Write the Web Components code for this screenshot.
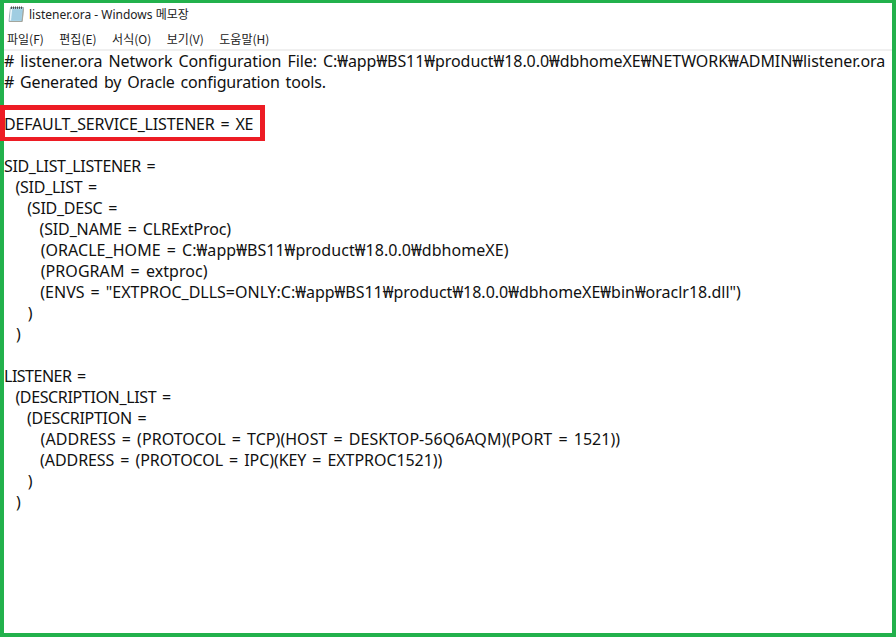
<!DOCTYPE html>
<html>
<head>
<meta charset="utf-8">
<title>listener.ora - Windows 메모장</title>
<style>
  html, body { margin: 0; padding: 0; background: #fff; }
  notepad-window { height: 637px; }
</style>
</head>
<body>
<notepad-window>
  <notepad-titlebar>listener.ora - Windows 메모장</notepad-titlebar>
  <notepad-menubar></notepad-menubar>
  <notepad-editor></notepad-editor>
</notepad-window>

<script>
class NotepadWindow extends HTMLElement {
  constructor() {
    super();
    this.attachShadow({ mode: 'open' });
    this.shadowRoot.innerHTML = `
      <style>
        :host {
          display: flex;
          flex-direction: column;
          box-sizing: border-box;
          width: 896px;
          border: solid #22b14c;
          border-width: 3px 4px 4px 4px;
          background: #fff;
          position: relative;
        }
      </style>
      <slot></slot>
    `;
  }
}

class NotepadTitlebar extends HTMLElement {
  constructor() {
    super();
    this.attachShadow({ mode: 'open' });
    this.shadowRoot.innerHTML = `
      <style>
        :host {
          display: flex;
          align-items: center;
          gap: 5px;
          box-sizing: border-box;
          height: 25px;
          padding: 0 0 4px 4px;
          font: 12px "Noto Sans", "Noto Sans CJK KR", sans-serif;
          color: #222;
        }
        svg { width: 16px; height: 16px; flex: none; }
      </style>
      <svg viewBox="0 0 16 16">
        <path d="M2.5 1.5h13l-1.5 14H1z" fill="#a8d3e6" stroke="#8a9aa3" stroke-width=".8"/>
        <path d="M2.6 3h1.6L3 14.6H1.6z" fill="#eef7fb"/>
        <path d="M4.5 5h9.5M4.3 7h9.5M4.1 9h9.5M3.9 11h9.5M3.7 13h9.5" stroke="#8fc0d8" stroke-width=".6"/>
        <path d="M3.5 .5v2.4M5.5 .5v2.4M7.5 .5v2.4M9.5 .5v2.4M11.5 .5v2.4M13.5 .5v2.4" stroke="#4a4a4a" stroke-width="1"/>
        <path d="M2 15.6h12.2l1.4-13" fill="none" stroke="#a8a493" stroke-width=".8"/>
      </svg>
      <slot></slot>
    `;
  }
}

class NotepadMenubar extends HTMLElement {
  constructor() {
    super();
    this.attachShadow({ mode: 'open' });
    const items = ['파일(F)', '편집(E)', '서식(O)', '보기(V)', '도움말(H)'];
    this.shadowRoot.innerHTML = `
      <style>
        :host {
          display: flex;
          align-items: center;
          gap: 15.5px;
          height: 21px;
          padding: 1px 0 0 3px;
          box-sizing: content-box;
          margin-top: -1px;
          font: 12px "Noto Sans CJK KR", "Noto Sans", sans-serif;
          color: #222;
          border-bottom: 2px solid #f0f0f0;
        }
      </style>
      ${items.map(item => `<span>${item}</span>`).join('')}
    `;
  }
}

class NotepadEditor extends HTMLElement {
  constructor() {
    super();
    this.attachShadow({ mode: 'open' });
    // [text, letter-spacing in px]: the fallback font's capitals and _ are off from the original
    const lines = [
      ['# listener.ora Network Configuration File: C:₩app₩BS11₩product₩18.0.0₩dbhomeXE₩NETWORK₩ADMIN₩listener.ora', -0.06],
      ['# Generated by Oracle configuration tools.', -0.17],
      [''],
      ['DEFAULT_SERVICE_LISTENER = XE', -0.17],
      [''],
      ['SID_LIST_LISTENER =', -0.36],
      ['  (SID_LIST =', -0.28],
      ['    (SID_DESC =', -0.24],
      ['      (SID_NAME = CLRExtProc)', -0.14],
      ['      (ORACLE_HOME = C:₩app₩BS11₩product₩18.0.0₩dbhomeXE)', 0.05],
      ['      (PROGRAM = extproc)', 0.06],
      ['      (ENVS = "EXTPROC_DLLS=ONLY:C:₩app₩BS11₩product₩18.0.0₩dbhomeXE₩bin₩oraclr18.dll")', -0.01],
      ['    )', -0.1],
      ['  )', -0.1],
      [''],
      ['LISTENER =', -0.5],
      ['  (DESCRIPTION_LIST =', -0.36],
      ['    (DESCRIPTION =', -0.3],
      ['      (ADDRESS = (PROTOCOL = TCP)(HOST = DESKTOP-56Q6AQM)(PORT = 1521))', 0.04],
      ['      (ADDRESS = (PROTOCOL = IPC)(KEY = EXTPROC1521))', -0.06],
      ['    )', -0.1],
      ['  )', -0.1]
    ];
    this.shadowRoot.innerHTML = `
      <style>
        :host {
          display: block;
          flex: 1;
          position: relative;
          font: 16px/21px "Noto Sans", "Noto Sans CJK KR", sans-serif;
          word-spacing: 1.9px;
          color: #111;
        }
        .line { white-space: pre; height: 21px; }
        .mark {
          position: absolute;
          left: -4px;
          top: 54px;
          width: 255px;
          height: 27px;
          border: 5px solid #ed1c24;
          border-bottom-width: 4px;
        }
      </style>
      ${lines.map(([text, track]) => `<div class="line" style="letter-spacing:${track || 0}px">${text}</div>`).join('')}
      <div class="mark"></div>
    `;
  }
}

customElements.define('notepad-window', NotepadWindow);
customElements.define('notepad-titlebar', NotepadTitlebar);
customElements.define('notepad-menubar', NotepadMenubar);
customElements.define('notepad-editor', NotepadEditor);
</script>
</body>
</html>
